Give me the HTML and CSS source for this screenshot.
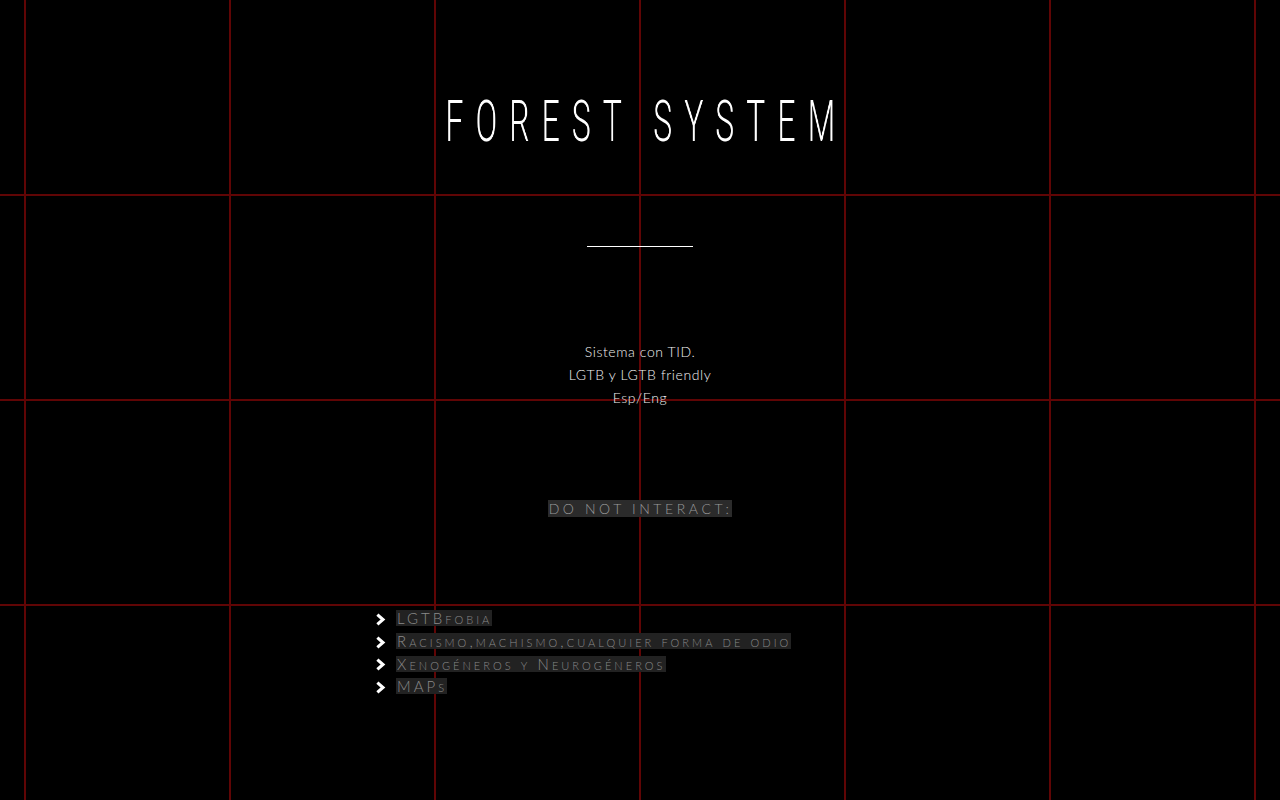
FILE: index.html
```html
<!DOCTYPE html>
<html lang="es">
<head>
<meta charset="utf-8">
<title>Forest System</title>
<link rel="stylesheet" href="styles.css">
</head>
<body>
<main class="page">
  <h1 class="title">FOREST SYSTEM</h1>
  <hr class="divider">
  <div class="intro">
    <p>Sistema con TID.</p>
    <p>LGTB y LGTB friendly</p>
    <p>Esp/Eng</p>
  </div>
  <div class="dni"><span>DO NOT INTERACT:</span></div>
  <ul class="list">
    <li><svg class="chev" viewBox="0 0 10 10"><path d="M2.6 1.2 L6.9 5 L2.6 8.8" /></svg><span>LGTBfobia</span></li>
    <li><svg class="chev" viewBox="0 0 10 10"><path d="M2.6 1.2 L6.9 5 L2.6 8.8" /></svg><span>Racismo,machismo,cualquier forma de odio</span></li>
    <li><svg class="chev" viewBox="0 0 10 10"><path d="M2.6 1.2 L6.9 5 L2.6 8.8" /></svg><span>Xenogéneros y Neurogéneros</span></li>
    <li><svg class="chev" viewBox="0 0 10 10"><path d="M2.6 1.2 L6.9 5 L2.6 8.8" /></svg><span>MAPs</span></li>
  </ul>
</main>
</body>
</html>
```
FILE: styles.css
```css
html, body {
  margin: 0;
  padding: 0;
  height: 100%;
}
body {
  background-color: #000;
  background-image:
    linear-gradient(to right, #600505 0, #600505 2px, transparent 2px),
    linear-gradient(to bottom, #600505 0, #600505 2px, transparent 2px);
  background-size: 205px 205px;
  background-position: 24px 194px;
  color: #fff;
  font-family: "Lato", "Noto Sans", sans-serif;
  overflow: hidden;
}
.page {
  display: flex;
  flex-direction: column;
  align-items: center;
  padding-top: 91px;
}
.title {
  margin: 0;
  font-family: "Roboto", sans-serif;
  font-weight: 300;
  font-size: 58px;
  line-height: 60px;
  letter-spacing: 22px;
  padding-left: 22px;
  transform: scaleX(0.55);
  will-change: transform;
  color: #fff;
  white-space: nowrap;
}
.divider {
  width: 106px;
  border: 0;
  border-top: 1px solid #fff;
  margin: 95px 0 0 0;
}
.intro {
  margin-top: 93px;
  text-align: center;
  font-size: 14px;
  font-weight: 300;
  letter-spacing: 0.6px;
  line-height: 23px;
  color: #f2f2f2;
}
.intro p {
  margin: 0;
}
.dni {
  margin-top: 91px;
  font-size: 14px;
  font-weight: 300;
  letter-spacing: 3.6px;
  color: #9a9a9a;
  line-height: 18px;
}
.dni span {
  background: #2b2b2b;
  padding: 0 0 0 1px;
}
.list {
  list-style: none;
  margin: 89px 0 0 0;
  padding: 0;
  width: 526px;
  font-size: 15px;
  font-weight: 300;
  font-variant: small-caps;
  letter-spacing: 3.05px;
  color: #8a8a8a;
}
.list li {
  display: flex;
  align-items: center;
  height: 22.7px;
}
.list span {
  background: #222;
  padding: 0 0 0 1px;
  line-height: 16px;
}
.chev {
  width: 13px;
  height: 13px;
  margin-left: -3px;
  margin-right: 9px;
  margin-top: 2px;
  fill: none;
  stroke: #fff;
  stroke-width: 2.4;
}
```
